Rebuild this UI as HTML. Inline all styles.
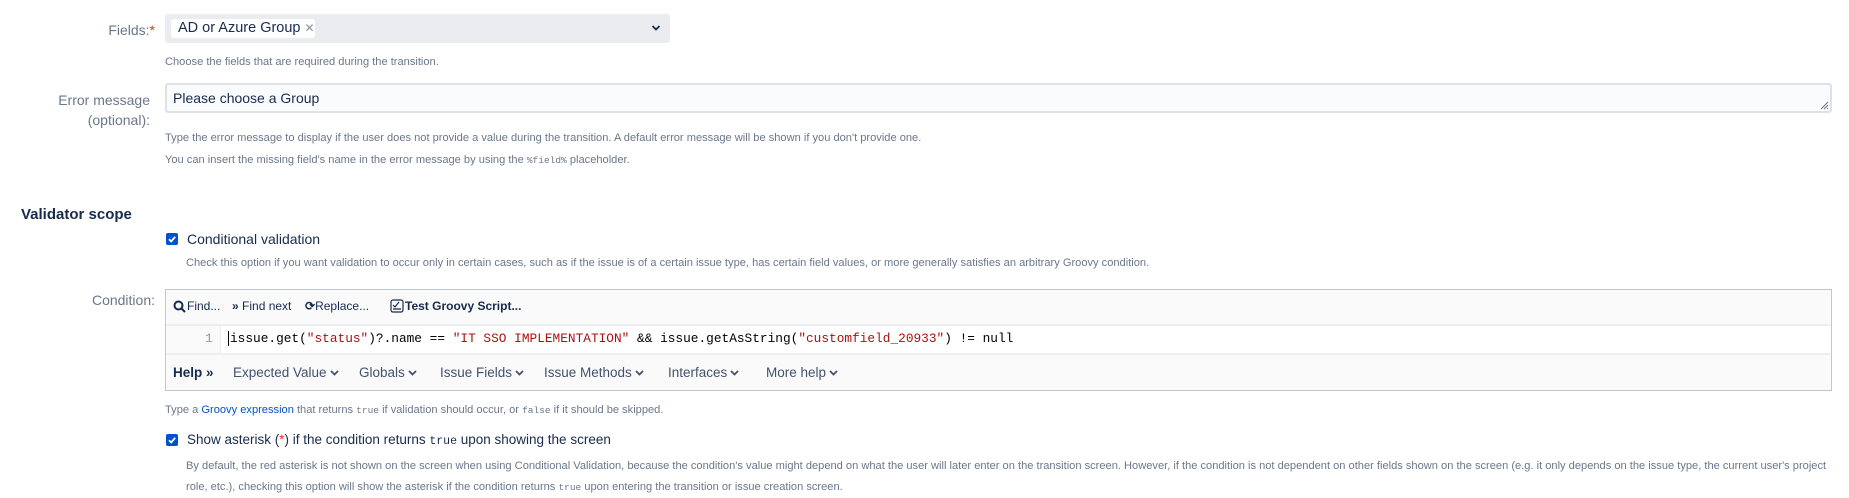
<!DOCTYPE html>
<html><head><meta charset="utf-8"><style>
*{box-sizing:border-box;margin:0;padding:0}
body{width:1849px;height:498px;background:#fff;font-family:"Liberation Sans",sans-serif;color:#172b4d;position:relative;overflow:hidden}
.a{position:absolute;white-space:nowrap}
.lbl{font-size:14px;color:#6b778c;text-align:right;width:155px;left:0}
.help{font-size:11.1px;color:#6b778c}
.req{color:#de350b}
code,.mono{font-family:"Liberation Mono",monospace}
.cb{position:absolute;width:12px;height:12px;border-radius:2px;background:#0052cc}
.txt{font-size:14px}
.tb{font-size:12px;color:#172b4d}
.hb{font-size:13.5px;color:#42526e}
.hb svg{margin-left:3px;vertical-align:1px}
</style></head><body>

<div class="a lbl" style="top:22px">Fields:<span class="req">*</span></div>
<div class="a" style="left:165px;top:14px;width:505px;height:29px;background:#ebecf0;border-radius:3px"></div>
<div class="a" style="left:171px;top:19px;width:144px;height:19px;background:#fff;border-radius:3px;font-size:14.5px;padding:1px 0 0 7px">AD or Azure Group <span style="color:#8993a4;font-size:12px">✕</span></div>
<svg class="a" style="left:651px;top:24px" width="10" height="8" viewBox="0 0 10 8"><path d="M1.5 2 L5 5.5 L8.5 2" stroke="#172b4d" stroke-width="1.8" fill="none"/></svg>
<div class="a help" style="left:165px;top:56px">Choose the fields that are required during the transition.</div>

<div class="a lbl" style="top:90px;line-height:20px;width:150px">Error message<br>(optional):</div>
<div class="a" style="left:165px;top:83px;width:1667px;height:30px;background:#fafbfc;border:2px solid #dfe1e6;border-radius:3px"></div>
<div class="a txt" style="left:173px;top:90px">Please choose a Group</div>
<svg class="a" style="left:1820px;top:101px" width="9" height="9"><path d="M1 8L8 1M4 8L8 4M7 8L8 7" stroke="#777" stroke-width="1"/></svg>
<div class="a help" style="left:165px;top:132px">Type the error message to display if the user does not provide a value during the transition. A default error message will be shown if you don't provide one.</div>
<div class="a help" style="left:165px;top:154px">You can insert the missing field's name in the error message by using the <span class="mono" style="font-size:9.5px">%field%</span> placeholder.</div>

<div class="a" style="left:21px;top:206px;font-size:15px;font-weight:bold;color:#172b4d">Validator scope</div>
<div class="cb" style="left:166px;top:233px"></div>
<svg class="a" style="left:166px;top:233px" width="12" height="12"><path d="M3 6.2L5.2 8.4L9.2 3.8" stroke="#fff" stroke-width="1.8" fill="none"/></svg>
<div class="a txt" style="left:187px;top:231px">Conditional validation</div>
<div class="a help" style="left:186px;top:257px">Check this option if you want validation to occur only in certain cases, such as if the issue is of a certain issue type, has certain field values, or more generally satisfies an arbitrary Groovy condition.</div>

<div class="a lbl" style="top:292px">Condition:</div>
<div class="a" style="left:165px;top:289px;width:1667px;height:102px;border:1px solid #c1c7d0;background:#fafafa"></div>
<div class="a" style="left:166px;top:324px;width:1665px;height:2px;background:#eee"></div>
<div class="a" style="left:166px;top:326px;width:1665px;height:27px;background:#fff"></div>
<div class="a" style="left:166px;top:353px;width:1665px;height:2px;background:#eee"></div>
<div class="a" style="left:166px;top:326px;width:55px;height:27px;background:#fafafa;border-right:1px solid #eee"></div>
<svg class="a" style="left:173px;top:300px" width="13" height="13"><circle cx="5.5" cy="5.5" r="4" stroke="#172b4d" stroke-width="2" fill="none"/><path d="M8.5 8.5L12 12" stroke="#172b4d" stroke-width="2"/></svg>
<div class="a tb" style="left:187px;top:299px">Find...</div>
<div class="a tb" style="left:232px;top:299px"><b>»</b> Find next</div>
<div class="a tb" style="left:305px;top:299px"><b>⟳</b>Replace...</div>
<svg class="a" style="left:390px;top:299px" width="14" height="14"><rect x="1" y="1" width="12" height="12" rx="2" stroke="#172b4d" stroke-width="1.2" fill="none"/><path d="M3 6l2 2 4-5M3 10h8" stroke="#172b4d" stroke-width="1.2" fill="none"/></svg>
<div class="a tb" style="left:405px;top:299px;font-weight:bold">Test Groovy Script...</div>
<div class="a mono" style="left:205px;top:331px;font-size:13px;color:#999">1</div>
<div class="a mono" style="left:228px;top:331px;font-size:12.8px;color:#000;border-left:1px solid #000;padding-left:1px">issue.get(<span style="color:#a11">"status"</span>)?.name == <span style="color:#a11">"IT SSO IMPLEMENTATION"</span> &amp;&amp; issue.getAsString(<span style="color:#a11">"customfield_20933"</span>) != null</div>
<div class="a hb" style="left:173px;top:365px;color:#172b4d;font-weight:bold">Help »</div>
<div class="a hb" style="left:233px;top:365px">Expected Value<svg width="9" height="6"><path d="M1 1l3.5 3.5L8 1" stroke="#42526e" stroke-width="1.8" fill="none"/></svg></div>
<div class="a hb" style="left:359px;top:365px">Globals<svg width="9" height="6"><path d="M1 1l3.5 3.5L8 1" stroke="#42526e" stroke-width="1.8" fill="none"/></svg></div>
<div class="a hb" style="left:440px;top:365px">Issue Fields<svg width="9" height="6"><path d="M1 1l3.5 3.5L8 1" stroke="#42526e" stroke-width="1.8" fill="none"/></svg></div>
<div class="a hb" style="left:544px;top:365px">Issue Methods<svg width="9" height="6"><path d="M1 1l3.5 3.5L8 1" stroke="#42526e" stroke-width="1.8" fill="none"/></svg></div>
<div class="a hb" style="left:668px;top:365px">Interfaces<svg width="9" height="6"><path d="M1 1l3.5 3.5L8 1" stroke="#42526e" stroke-width="1.8" fill="none"/></svg></div>
<div class="a hb" style="left:766px;top:365px">More help<svg width="9" height="6"><path d="M1 1l3.5 3.5L8 1" stroke="#42526e" stroke-width="1.8" fill="none"/></svg></div>

<div class="a help" style="left:165px;top:404px">Type a <span style="color:#0052cc">Groovy expression</span> that returns <span class="mono" style="font-size:9.5px">true</span> if validation should occur, or <span class="mono" style="font-size:9.5px">false</span> if it should be skipped.</div>

<div class="cb" style="left:166px;top:434px"></div>
<svg class="a" style="left:166px;top:434px" width="12" height="12"><path d="M3 6.2L5.2 8.4L9.2 3.8" stroke="#fff" stroke-width="1.8" fill="none"/></svg>
<div class="a txt" style="left:187px;top:432px;font-size:13.5px">Show asterisk (<span class="req">*</span>) if the condition returns <span class="mono" style="font-size:11.5px">true</span> upon showing the screen</div>
<div class="a help" style="left:186px;top:460px">By default, the red asterisk is not shown on the screen when using Conditional Validation, because the condition's value might depend on what the user will later enter on the transition screen. However, if the condition is not dependent on other fields shown on the screen (e.g. it only depends on the issue type, the current user's project</div>
<div class="a help" style="left:186px;top:481px">role, etc.), checking this option will show the asterisk if the condition returns <span class="mono" style="font-size:9.5px">true</span> upon entering the transition or issue creation screen.</div>
</body></html>
